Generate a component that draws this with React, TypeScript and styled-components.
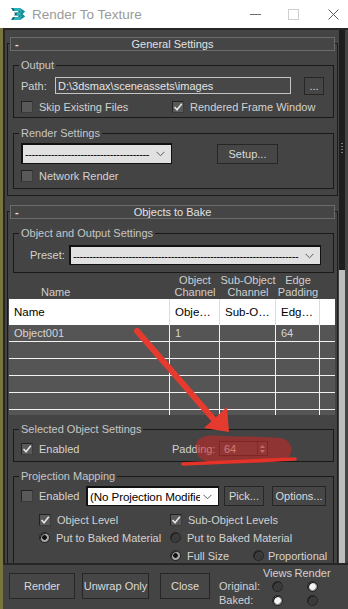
import React from "react";
import styled, { createGlobalStyle } from "styled-components";

const GlobalStyle = createGlobalStyle`
  html, body {
    margin: 0;
    padding: 0;
    background: #444444;
  }
  body {
    font-family: "Liberation Sans", Arial, sans-serif;
    font-size: 11px;
    color: #d8d8d8;
  }
  * {
    box-sizing: border-box;
  }
`;

const Window = styled.div`
  position: relative;
  width: 348px;
  height: 609px;
  display: flex;
  flex-direction: column;
  background: #444444;
  overflow: hidden;
`;

const TitleBar = styled.div`
  height: 28px;
  flex-shrink: 0;
  background: #ffffff;
  display: flex;
  align-items: center;
  padding-left: 10px;
`;

const Title = styled.span`
  margin-left: 6px;
  font-size: 13.5px;
  color: #9a9a9a;
`;

const WinControls = styled.div`
  margin-left: auto;
  display: flex;
  height: 100%;
`;

const WinBtn = styled.div<{ $w: number; $ml?: number }>`
  width: ${(p) => p.$w}px;
  margin-left: ${(p) => p.$ml || 0}px;
  display: flex;
  align-items: center;
  justify-content: center;
`;

const Body = styled.div`
  flex: 1;
  display: flex;
  flex-direction: column;
  border-left: 3px solid #77763f;
`;

const Viewport = styled.div`
  height: 537px;
  flex-shrink: 0;
  display: flex;
  border-top: 2px solid #262626;
  border-bottom: 2px solid #262626;
  border-left: 2px solid #262626;
`;

const ScrollContent = styled.div`
  flex: 0 0 333px;
  overflow: hidden;
  padding-left: 2px;
`;

const ScrollBar = styled.div`
  width: 6px;
  margin-left: 1px;
  display: flex;
  flex-direction: column;
  background: #bdbdbd;
`;

const ScrollThumb = styled.div`
  height: 240px;
  background: #1e1e1e;
  display: flex;
  flex-direction: column;
  align-items: center;
  gap: 2px;
  padding-top: 113px;
`;

const Grip = styled.span`
  width: 2px;
  height: 1px;
  background: #777;
`;

const Frame = styled.div<{ $mt: number }>`
  margin-top: ${(p) => p.$mt}px;
  width: 331px;
  border: 1px solid #1b1b1b;
  padding: 0 3px 6px 5px;
`;

const RolloutHeader = styled.div`
  margin: -7px -1px 0 -3px;
  height: 14px;
  border: 1px solid #6c6c6c;
  background: #454545;
  display: grid;
  grid-template-columns: 20px 1fr 20px;
  align-items: center;
  color: #e2e2e2;
  line-height: 12px;
`;

const Minus = styled.span`
  padding-left: 4px;
  font-weight: bold;
`;

const HeaderTitle = styled.span`
  text-align: center;
`;

const Group = styled.div<{ $mt: number; $h: number }>`
  margin-top: ${(p) => p.$mt}px;
  height: ${(p) => p.$h}px;
  border: 1px solid #1a1a1a;
  padding-left: 7px;
`;

const Legend = styled.div`
  margin: -7px 0 0 -2px;
  padding: 0 2px;
  width: fit-content;
  height: 13px;
  line-height: 13px;
  background: #444444;
  color: #c6c6c6;
`;

const Row = styled.div<{ $mt: number; $h: number; $pl?: number }>`
  display: flex;
  align-items: center;
  margin-top: ${(p) => p.$mt}px;
  height: ${(p) => p.$h}px;
  padding-left: ${(p) => p.$pl || 0}px;
  white-space: nowrap;
`;

const Cell = styled.div<{ $w?: number; $ml?: number }>`
  display: flex;
  align-items: center;
  ${(p) => (p.$w ? `width: ${p.$w}px; flex-shrink: 0;` : "")}
  margin-left: ${(p) => p.$ml || 0}px;
  white-space: nowrap;
`;

const Label = styled.span<{ $w?: number; $ml?: number }>`
  ${(p) => (p.$w ? `width: ${p.$w}px; flex-shrink: 0;` : "")}
  margin-left: ${(p) => p.$ml || 0}px;
  color: #d2d2d2;
`;

const Box = styled.span`
  width: 12px;
  height: 12px;
  flex-shrink: 0;
  margin-right: 6px;
  background: #595959;
  border-top: 1px solid #222;
  border-left: 1px solid #222;
  border-right: 1px solid #3c3c3c;
  border-bottom: 1px solid #3c3c3c;
  display: flex;
  align-items: center;
  justify-content: center;
`;

const Dot = styled.span<{ $on?: boolean; $light?: boolean; $mr?: number }>`
  width: 11px;
  height: 11px;
  flex-shrink: 0;
  margin-right: ${(p) => (p.$mr === undefined ? 6 : p.$mr)}px;
  border-radius: 50%;
  border: 1px solid #232323;
  background: ${(p) =>
    p.$on
      ? p.$light
        ? "radial-gradient(circle, #f4f4f4 0 3px, #9a9a9a 3.5px 4.5px)"
        : "radial-gradient(circle, #111 0 2px, #a8a8a8 2.6px 4.5px)"
      : "radial-gradient(circle at 60% 60%, #3a3a3a 0 3px, #4a4a4a 4.5px)"};
  box-shadow: inset 1px 1px 0 #1f1f1f;
`;

const TextInput = styled.div<{ $w: number }>`
  width: ${(p) => p.$w}px;
  height: 17px;
  border: 1px solid #c4c4c4;
  background: #474747;
  color: #e4e4e4;
  padding-left: 2px;
  display: flex;
  align-items: center;
`;

const Button = styled.div<{ $w: number; $h: number; $ml?: number; $mt?: number }>`
  width: ${(p) => p.$w}px;
  height: ${(p) => p.$h}px;
  margin-left: ${(p) => p.$ml || 0}px;
  margin-top: ${(p) => p.$mt || 0}px;
  flex-shrink: 0;
  border: 1px solid #262626;
  background: #464646;
  color: #dadada;
  display: flex;
  align-items: center;
  justify-content: center;
  white-space: nowrap;
`;

const Select = styled.div<{ $w: number; $h: number; $ml?: number; $bg?: string }>`
  width: ${(p) => p.$w}px;
  height: ${(p) => p.$h}px;
  margin-left: ${(p) => p.$ml || 0}px;
  flex-shrink: 0;
  background: ${(p) => p.$bg || "#e1e1e1"};
  border: 2px solid #111;
  border-right-width: 1px;
  border-bottom-width: 1px;
  display: flex;
  align-items: center;
  padding: 0 6px 0 2px;
  color: #000;
  font-size: ${(p) => (p.$bg ? "11.6px" : "11px")};
`;

const SelectText = styled.span<{ $tight?: boolean }>`
  flex: 1;
  overflow: hidden;
  white-space: nowrap;
  letter-spacing: ${(p) => (p.$tight ? "-0.4px" : "-0.1px")};
`;

const Chevron = styled.svg`
  margin-left: 3px;
  flex-shrink: 0;
`;

const TableHead = styled.div`
  margin-left: -4px;
  width: 326px;
  height: 26px;
  display: grid;
  grid-template-columns: 161px 50px 56px 44px 15px;
  align-items: end;
  line-height: 12px;
  color: #cfcfcf;
  padding-bottom: 1px;
`;

const HeadLabel = styled.div<{ $pl?: number }>`
  text-align: ${(p) => (p.$pl ? "left" : "center")};
  padding-left: ${(p) => p.$pl || 0}px;
  white-space: nowrap;
`;

const Table = styled.div`
  margin-left: -4px;
  width: 326px;
  height: 116px;
  overflow: hidden;
`;

const TRow = styled.div<{ $head?: boolean }>`
  display: grid;
  grid-template-columns: 161px 50px 56px 44px 15px;
  height: ${(p) => (p.$head ? 26 : 17)}px;
  background: ${(p) => (p.$head ? "#ffffff" : "#555555")};
  color: ${(p) => (p.$head ? "#000" : "#d4d4d4")};
  border-bottom: ${(p) => (p.$head ? "none" : "1px solid #f2f2f2")};
`;

const TCell = styled.div<{ $head?: boolean; $last?: boolean }>`
  display: flex;
  align-items: center;
  padding-left: 5px;
  white-space: nowrap;
  overflow: hidden;
  border-right: ${(p) => (p.$last ? "none" : p.$head ? "1px solid #dcdcdc" : "1px solid #f2f2f2")};
  font-size: ${(p) => (p.$head ? "11.5px" : "11px")};
`;

const Spinner = styled.div`
  width: 49px;
  height: 15px;
  margin-left: 6px;
  border: 1px solid #222;
  background: #4a4a4a;
  display: flex;
  color: #d8d8d8;
`;

const SpinnerValue = styled.span`
  flex: 1;
  padding-left: 4px;
  display: flex;
  align-items: center;
`;

const SpinnerArrows = styled.span`
  width: 10px;
  border-left: 1px solid #2a2a2a;
  display: flex;
  flex-direction: column;
  align-items: center;
  justify-content: center;
  gap: 2px;
`;

const BottomBar = styled.div`
  flex: 1;
  display: flex;
  align-items: flex-start;
  padding: 2px 0 0 6px;
`;

const ViewGrid = styled.div`
  margin-left: 9px;
  display: grid;
  grid-template-columns: 53px 11px 35px;
  grid-template-rows: 12px 14px 14px;
  align-items: center;
  color: #d2d2d2;
`;

const Centered = styled.div<{ $pl?: number }>`
  display: flex;
  justify-content: center;
  white-space: nowrap;
  padding-left: ${(p) => p.$pl || 0}px;
`;

const Overlay = styled.svg`
  position: absolute;
  left: 0;
  top: 0;
  pointer-events: none;
`;

const Check = () => (
  <svg width="10" height="10" viewBox="0 0 10 10">
    <path d="M1.5 5 L4 7.8 L8.8 1.8" fill="none" stroke="#e6e6e6" strokeWidth="1.6" />
  </svg>
);

const Checkbox = ({ checked }: { checked?: boolean }) => <Box>{checked && <Check />}</Box>;

const Down = () => (
  <Chevron width="9" height="6" viewBox="0 0 9 6">
    <path d="M0.5 0.8 L4.5 4.8 L8.5 0.8" fill="none" stroke="#5c5c5c" strokeWidth="1" />
  </Chevron>
);

const MaxLogo = () => (
  <svg width="16" height="16" viewBox="0 0 16 16">
    <path d="M1 2 H9 L13 5.5 L11 8 L13 10.5 L9 14 H1 L3 11 H8 L9 9.5 H4 L5 8 L4 6.5 H9 L8 5 H3 Z" fill="#0f6670" />
    <path d="M3 2 H10 L15 5.5 L12.5 8 L15 10.5 L10 14 H3 L5 11 H9.5 L10.5 9.5 H6 L7 8 L6 6.5 H10.5 L9.5 5 H5 Z" fill="#2bb3bc" />
    <path d="M10 2 L15 5.5 L12.5 8 L15 10.5 L10 14 L11.5 10.5 L10.5 8 L11.5 5.5 Z" fill="#1b8e97" />
  </svg>
);

const RadioPair = ({ left, right }: { left?: boolean; right?: boolean }) => (
  <>
    <Dot $on={left} $light $mr={0} />
    <Centered $pl={24}>
      <Dot $on={right} $light $mr={0} />
    </Centered>
  </>
);

const rows = [
  ["Object001", "1", "", "64"],
  ["", "", "", ""],
  ["", "", "", ""],
  ["", "", "", ""],
  ["", "", "", ""],
  ["", "", "", ""],
];

const App = () => {
  return (
    <Window>
      <GlobalStyle />
      <TitleBar>
        <MaxLogo />
        <Title>Render To Texture</Title>
        <WinControls>
          <WinBtn $w={38}>
            <svg width="11" height="1">
              <rect width="11" height="1" fill="#6e6e6e" />
            </svg>
          </WinBtn>
          <WinBtn $w={38}>
            <svg width="11" height="11">
              <rect x="0.5" y="0.5" width="10" height="10" fill="none" stroke="#cfcfcf" />
            </svg>
          </WinBtn>
          <WinBtn $w={30} $ml={6}>
            <svg width="11" height="11">
              <path d="M0.5 0.5 L10.5 10.5 M10.5 0.5 L0.5 10.5" stroke="#5a5a5a" strokeWidth="1" />
            </svg>
          </WinBtn>
        </WinControls>
      </TitleBar>

      <Body>
        <Viewport>
          <ScrollContent>
            <Frame $mt={13}>
              <RolloutHeader>
                <Minus>-</Minus>
                <HeaderTitle>General Settings</HeaderTitle>
                <span />
              </RolloutHeader>

              <Group $mt={14} $h={53}>
                <Legend>Output</Legend>
                <Row $mt={5} $h={17}>
                  <Label $w={34}>Path:</Label>
                  <TextInput $w={236}>D:\3dsmax\sceneassets\images</TextInput>
                  <Button $w={20} $h={18} $ml={13}>...</Button>
                </Row>
                <Row $mt={6} $h={13}>
                  <Cell $w={151}>
                    <Checkbox />
                    <Label>Skip Existing Files</Label>
                  </Cell>
                  <Cell>
                    <Checkbox checked />
                    <Label>Rendered Frame Window</Label>
                  </Cell>
                </Row>
              </Group>

              <Group $mt={15} $h={56}>
                <Legend>Render Settings</Legend>
                <Row $mt={3} $h={21}>
                  <Select $w={151} $h={21}>
                    <SelectText $tight>{"-".repeat(38)}</SelectText>
                    <Down />
                  </Select>
                  <Button $w={61} $h={20} $ml={45}>Setup...</Button>
                </Row>
                <Row $mt={5} $h={13}>
                  <Checkbox />
                  <Label>Network Render</Label>
                </Row>
              </Group>
            </Frame>

            <Frame $mt={15}>
              <RolloutHeader>
                <Minus>-</Minus>
                <HeaderTitle>Objects to Bake</HeaderTitle>
                <span />
              </RolloutHeader>

              <Group $mt={14} $h={40}>
                <Legend>Object and Output Settings</Legend>
                <Row $mt={5} $h={20}>
                  <Label $w={39} $ml={9}>Preset:</Label>
                  <Select $w={252} $h={20}>
                    <SelectText $tight>{"-".repeat(69)}</SelectText>
                    <Down />
                  </Select>
                </Row>
              </Group>

              <TableHead>
                <HeadLabel $pl={32}>Name</HeadLabel>
                <HeadLabel>
                  Object
                  <br />
                  Channel
                </HeadLabel>
                <HeadLabel>
                  Sub-Object
                  <br />
                  Channel
                </HeadLabel>
                <HeadLabel>
                  Edge
                  <br />
                  Padding
                </HeadLabel>
                <span />
              </TableHead>
              <Table>
                <TRow $head>
                  <TCell $head>Name</TCell>
                  <TCell $head>Obje…</TCell>
                  <TCell $head>Sub-O…</TCell>
                  <TCell $head>Edg…</TCell>
                  <TCell $head $last />
                </TRow>
                {rows.map((r, i) => (
                  <TRow key={i}>
                    {r.map((c, j) => (
                      <TCell key={j}>{c}</TCell>
                    ))}
                    <TCell $last />
                  </TRow>
                ))}
              </Table>

              <Group $mt={14} $h={33}>
                <Legend>Selected Object Settings</Legend>
                <Row $mt={5} $h={15}>
                  <Cell $w={151}>
                    <Checkbox checked />
                    <Label>Enabled</Label>
                  </Cell>
                  <Label $w={41}>Padding:</Label>
                  <Spinner>
                    <SpinnerValue>64</SpinnerValue>
                    <SpinnerArrows>
                      <svg width="5" height="3">
                        <path d="M0 3 L2.5 0 L5 3 Z" fill="#bbb" />
                      </svg>
                      <svg width="5" height="3">
                        <path d="M0 0 L2.5 3 L5 0 Z" fill="#bbb" />
                      </svg>
                    </SpinnerArrows>
                  </Spinner>
                </Row>
              </Group>

              <Group $mt={14} $h={110}>
                <Legend>Projection Mapping</Legend>
                <Row $mt={3} $h={20}>
                  <Cell $w={65}>
                    <Checkbox />
                    <Label>Enabled</Label>
                  </Cell>
                  <Select $w={133} $h={20} $bg="#ffffff">
                    <SelectText>(No Projection Modifier)</SelectText>
                    <Down />
                  </Select>
                  <Button $w={40} $h={20} $ml={5}>Pick...</Button>
                  <Button $w={54} $h={20} $ml={8}>Options...</Button>
                </Row>
                <Row $mt={7} $h={13} $pl={18}>
                  <Cell $w={131}>
                    <Checkbox checked />
                    <Label>Object Level</Label>
                  </Cell>
                  <Cell>
                    <Checkbox checked />
                    <Label>Sub-Object Levels</Label>
                  </Cell>
                </Row>
                <Row $mt={5} $h={13} $pl={18}>
                  <Cell $w={131}>
                    <Dot $on />
                    <Label>Put to Baked Material</Label>
                  </Cell>
                  <Cell>
                    <Dot />
                    <Label>Put to Baked Material</Label>
                  </Cell>
                </Row>
                <Row $mt={5} $h={13} $pl={149}>
                  <Cell $w={83}>
                    <Dot $on />
                    <Label>Full Size</Label>
                  </Cell>
                  <Cell>
                    <Dot $mr={4} />
                    <Label>Proportional</Label>
                  </Cell>
                </Row>
              </Group>
            </Frame>
          </ScrollContent>
          <ScrollBar>
            <ScrollThumb>
              <Grip />
              <Grip />
              <Grip />
              <Grip />
            </ScrollThumb>
          </ScrollBar>
        </Viewport>

        <BottomBar>
          <Button $w={66} $h={26} $mt={6}>Render</Button>
          <Button $w={67} $h={26} $ml={7} $mt={6}>Unwrap Only</Button>
          <Button $w={50} $h={26} $ml={11} $mt={6}>Close</Button>
          <ViewGrid>
            <span />
            <Centered>Views</Centered>
            <Centered $pl={24}>Render</Centered>
            <span>Original:</span>
            <RadioPair right />
            <span>Baked:</span>
            <RadioPair left />
          </ViewGrid>
        </BottomBar>
      </Body>

      <Overlay width="348" height="609" viewBox="0 0 348 609">
        <path
          d="M196 447 C195 436 210 434 222 436 C238 437 262 436 280 438 C294 440 295 456 284 460 C268 464 230 464 210 462 C199 460 196 455 196 447 Z"
          fill="rgba(205, 40, 36, 0.55)"
        />
        <path d="M183 464 L295 459" stroke="#e5332a" strokeWidth="3.5" strokeLinecap="round" />
        <path d="M137 331 L216 422" stroke="#e53b2f" strokeWidth="6" strokeLinecap="round" />
        <path d="M204 428 L227 407 L229 432 Z" fill="#e53b2f" />
      </Overlay>
    </Window>
  );
};

export default App;
